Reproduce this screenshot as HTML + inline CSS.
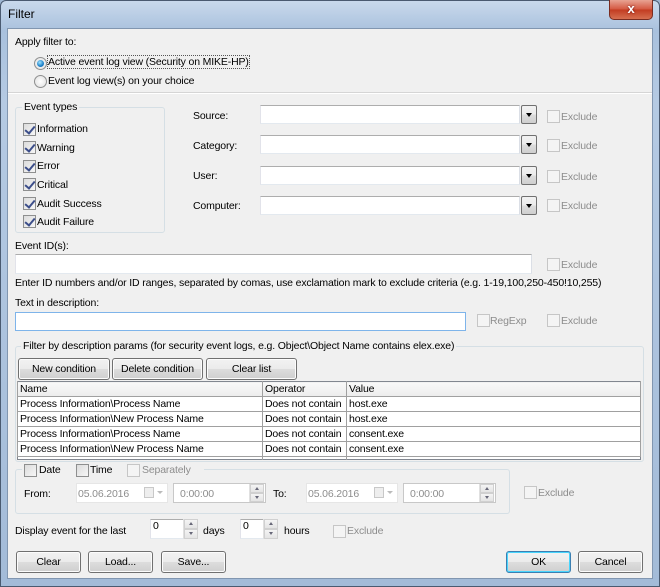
<!DOCTYPE html>
<html><head><meta charset="utf-8"><style>
*{box-sizing:border-box;margin:0;padding:0}
body{width:660px;height:587px;overflow:hidden;font-family:"Liberation Sans",sans-serif;font-size:10.5px;letter-spacing:-0.15px;color:#000;background:#9fb7d3;position:relative}
.a{position:absolute;white-space:nowrap}
.frame{position:absolute;left:0;top:0;width:660px;height:587px;border-radius:6px 6px 0 0;background:linear-gradient(#c9d9ec,#a9c1dd 30px,#b5cae3 100px,#a3bbd8);border:1px solid #4a5a70}
.client{position:absolute;left:7px;top:28px;width:646px;height:551px;background:#f0f0f0;border:1px solid #8196b0}
.cb{position:absolute;width:13px;height:13px;border:1px solid #8e8f8f;background:linear-gradient(135deg,#dcdcdc,#f6f6f6)}
.cb.d{border-color:#c6c6c6;background:#f4f4f4}
.cb.c::after{content:"";position:absolute;left:3px;top:0px;width:4px;height:8px;border:solid #3c4e8a;border-width:0 2px 2px 0;transform:rotate(40deg)}
.rb{position:absolute;width:13px;height:13px;border:1px solid #8e8f8f;border-radius:50%;background:radial-gradient(#fff,#ddd)}
.rb.s::after{content:"";position:absolute;left:2px;top:2px;width:7px;height:7px;border-radius:50%;background:radial-gradient(circle at 40% 35%,#9fe3ff,#1b7fc8 60%,#135c99)}
.in{position:absolute;background:#fff;border:1px solid #abadb3;border-top-color:#adadad;border-left-color:#e2e3ea;border-right-color:#dbdfe6;border-bottom-color:#e3e9ef}
.in.b{border:1px solid #abadb3}
.dd{position:absolute;width:16px;height:19px;border:1px solid #707070;border-radius:2px;background:linear-gradient(#f2f2f2,#ebebeb 50%,#dddddd 50%,#cfcfcf)}
.dd::after{content:"";position:absolute;left:4px;top:7px;border:3px solid transparent;border-top:4px solid #000;border-bottom:0}
.gb{position:absolute;border:1px solid #d5dfe5;border-radius:3px}
.btn{position:absolute;height:22px;border:1px solid #707070;border-radius:3px;background:linear-gradient(#f2f2f2,#ebebeb 50%,#dddddd 50%,#cfcfcf);text-align:center;line-height:20px;box-shadow:inset 0 0 0 1px #fcfcfc}
.gray{color:#8d8d8d}
.spin{position:absolute;width:15px;border-left:1px solid #e0e0e0}
.spin i{display:block;height:50%;border:1px solid #d0d0d0;background:linear-gradient(#f4f4f4,#e4e4e4);position:relative}
.spin i::after{content:"";position:absolute;left:4px;top:2px;border:2.5px solid transparent}
.spin i.u::after{border-bottom:3px solid #667;border-top:0}
.spin i.w::after{border-top:3px solid #667;border-bottom:0}
table{position:absolute;left:17px;top:381px;width:624px;border-collapse:collapse;background:#fff;border:1px solid #828790;table-layout:fixed}
td{height:15px;border:1px solid #a0a0a0;padding:0 2px;line-height:13px;border-top:none;white-space:nowrap;overflow:hidden}
tr.h td{background:linear-gradient(#f9f9f9,#ececec);border-bottom:1px solid #a0a0a0}
</style></head><body>
<div class="frame"></div>
<div class="a" style="left:8px;top:7px;font-size:12px;letter-spacing:0">Filter</div>
<div class="a" style="left:609px;top:0;width:44px;height:20px;border:1px solid #7a2c20;border-top:none;border-radius:0 0 5px 5px;background:linear-gradient(#e8a393,#d3563e 50%,#c23a20 50%,#d66f50);color:#fff;font-weight:bold;font-size:13px;text-align:center;line-height:18px;text-shadow:0 0 2px #600">x</div>
<div class="client"></div>

<div class="a" style="left:15px;top:36px">Apply filter to:</div>
<div class="rb s" style="left:34px;top:57px"></div>
<div class="a" style="left:48px;top:56px;outline:1px dotted #555">Active event log view (Security on MIKE-HP)</div>
<div class="rb" style="left:34px;top:75px"></div>
<div class="a" style="left:48px;top:75px">Event log view(s) on your choice</div>
<div class="a" style="left:8px;top:92px;width:644px;border-top:1px solid #d5d5d5;border-bottom:1px solid #fff"></div>

<div class="gb" style="left:15px;top:107px;width:150px;height:126px"></div>
<div class="a" style="left:22px;top:101px;background:#f0f0f0;padding:0 2px">Event types</div>
<div class="cb c" style="left:23px;top:123px"></div><div class="a" style="left:37px;top:123px">Information</div>
<div class="cb c" style="left:23px;top:141px"></div><div class="a" style="left:37px;top:142px">Warning</div>
<div class="cb c" style="left:23px;top:160px"></div><div class="a" style="left:37px;top:160px">Error</div>
<div class="cb c" style="left:23px;top:178px"></div><div class="a" style="left:37px;top:179px">Critical</div>
<div class="cb c" style="left:23px;top:197px"></div><div class="a" style="left:37px;top:198px">Audit Success</div>
<div class="cb c" style="left:23px;top:215px"></div><div class="a" style="left:37px;top:216px">Audit Failure</div>

<div class="a" style="left:193px;top:110px">Source:</div>
<div class="a" style="left:193px;top:140px">Category:</div>
<div class="a" style="left:193px;top:170px">User:</div>
<div class="a" style="left:193px;top:200px">Computer:</div>
<div class="in" style="left:260px;top:105px;width:260px;height:19px"></div><div class="dd" style="left:521px;top:105px"></div>
<div class="in" style="left:260px;top:135px;width:260px;height:19px"></div><div class="dd" style="left:521px;top:135px"></div>
<div class="in" style="left:260px;top:166px;width:260px;height:19px"></div><div class="dd" style="left:521px;top:166px"></div>
<div class="in" style="left:260px;top:196px;width:260px;height:19px"></div><div class="dd" style="left:521px;top:196px"></div>
<div class="cb d" style="left:547px;top:110px"></div><div class="a gray" style="left:561px;top:111px">Exclude</div>
<div class="cb d" style="left:547px;top:139px"></div><div class="a gray" style="left:561px;top:140px">Exclude</div>
<div class="cb d" style="left:547px;top:170px"></div><div class="a gray" style="left:561px;top:171px">Exclude</div>
<div class="cb d" style="left:547px;top:199px"></div><div class="a gray" style="left:561px;top:200px">Exclude</div>

<div class="a" style="left:15px;top:240px">Event ID(s):</div>
<div class="in" style="left:15px;top:254px;width:517px;height:20px"></div>
<div class="cb d" style="left:547px;top:258px"></div><div class="a gray" style="left:561px;top:259px">Exclude</div>
<div class="a" style="left:15px;top:277px">Enter ID numbers and/or ID ranges, separated by comas, use exclamation mark to exclude criteria (e.g. 1-19,100,250-450!10,255)</div>
<div class="a" style="left:15px;top:297px">Text in description:</div>
<div class="in" style="left:15px;top:312px;width:451px;height:19px;border:1px solid #7eb4ea"></div>
<div class="cb d" style="left:477px;top:314px"></div><div class="a gray" style="left:490px;top:315px">RegExp</div>
<div class="cb d" style="left:547px;top:314px"></div><div class="a gray" style="left:561px;top:315px">Exclude</div>

<div class="gb" style="left:15px;top:346px;width:629px;height:116px"></div>
<div class="a" style="left:21px;top:340px;background:#f0f0f0;padding:0 2px">Filter by description params (for security event logs, e.g. Object\Object Name contains elex.exe)</div>
<div class="btn" style="left:18px;top:358px;width:92px">New condition</div>
<div class="btn" style="left:112px;top:358px;width:91px">Delete condition</div>
<div class="btn" style="left:206px;top:358px;width:91px">Clear list</div>
<table>
<colgroup><col style="width:245px"><col style="width:84px"><col></colgroup>
<tr class="h"><td>Name</td><td>Operator</td><td>Value</td></tr>
<tr><td>Process Information\Process Name</td><td>Does not contain</td><td>host.exe</td></tr>
<tr><td>Process Information\New Process Name</td><td>Does not contain</td><td>host.exe</td></tr>
<tr><td>Process Information\Process Name</td><td>Does not contain</td><td>consent.exe</td></tr>
<tr><td>Process Information\New Process Name</td><td>Does not contain</td><td>consent.exe</td></tr>
<tr><td style="height:3px;border:none"></td><td style="height:3px;border-bottom:none"></td><td style="height:3px;border:none"></td></tr>
</table>

<div class="gb" style="left:15px;top:469px;width:495px;height:45px"></div>
<div class="a" style="left:22px;top:462px;width:182px;height:14px;background:#f0f0f0"></div>
<div class="cb" style="left:24px;top:464px"></div><div class="a" style="left:39px;top:464px">Date</div>
<div class="cb" style="left:76px;top:464px"></div><div class="a" style="left:90px;top:464px">Time</div>
<div class="cb d" style="left:127px;top:464px"></div><div class="a gray" style="left:142px;top:464px">Separately</div>
<div class="a" style="left:24px;top:488px">From:</div>
<div class="in" style="left:76px;top:483px;width:92px;height:20px;border-color:#e6e6e6"></div><div class="a gray" style="left:78px;top:488px">05.06.2016</div>
<div class="a" style="left:144px;top:487px;width:10px;height:11px;border:1px solid #c8c8c8;background:#eee"></div><div class="a" style="left:157px;top:491px;border:3px solid transparent;border-top:3px solid #bbb"></div>
<div class="in b" style="left:173px;top:483px;width:93px;height:20px;border-color:#c8c8c8"></div><div class="a gray" style="left:180px;top:488px">0:00:00</div>
<div class="spin" style="left:249px;top:484px;height:18px"><i class="u"></i><i class="w"></i></div>
<div class="a" style="left:273px;top:488px">To:</div>
<div class="in" style="left:306px;top:483px;width:92px;height:20px;border-color:#e6e6e6"></div><div class="a gray" style="left:308px;top:488px">05.06.2016</div>
<div class="a" style="left:374px;top:487px;width:10px;height:11px;border:1px solid #c8c8c8;background:#eee"></div><div class="a" style="left:387px;top:491px;border:3px solid transparent;border-top:3px solid #bbb"></div>
<div class="in b" style="left:403px;top:483px;width:93px;height:20px;border-color:#c8c8c8"></div><div class="a gray" style="left:410px;top:488px">0:00:00</div>
<div class="spin" style="left:479px;top:484px;height:18px"><i class="u"></i><i class="w"></i></div>
<div class="cb d" style="left:524px;top:486px"></div><div class="a gray" style="left:538px;top:487px">Exclude</div>

<div class="a" style="left:15px;top:525px">Display event for the last</div>
<div class="in" style="left:150px;top:519px;width:47px;height:20px"></div><div class="a" style="left:153px;top:520px">0</div>
<div class="spin" style="left:183px;top:519px;height:20px"><i class="u"></i><i class="w"></i></div>
<div class="a" style="left:203px;top:525px">days</div>
<div class="in" style="left:240px;top:519px;width:37px;height:20px"></div><div class="a" style="left:243px;top:520px">0</div>
<div class="spin" style="left:263px;top:519px;height:20px"><i class="u"></i><i class="w"></i></div>
<div class="a" style="left:284px;top:525px">hours</div>
<div class="cb d" style="left:333px;top:525px"></div><div class="a gray" style="left:347px;top:525px">Exclude</div>

<div class="btn" style="left:16px;top:551px;width:65px">Clear</div>
<div class="btn" style="left:88px;top:551px;width:65px">Load...</div>
<div class="btn" style="left:161px;top:551px;width:65px">Save...</div>
<div class="btn" style="left:506px;top:551px;width:65px;border-color:#3c7fb1;box-shadow:inset 0 0 0 1px #48d5fd">OK</div>
<div class="btn" style="left:578px;top:551px;width:65px">Cancel</div>
</body></html>
